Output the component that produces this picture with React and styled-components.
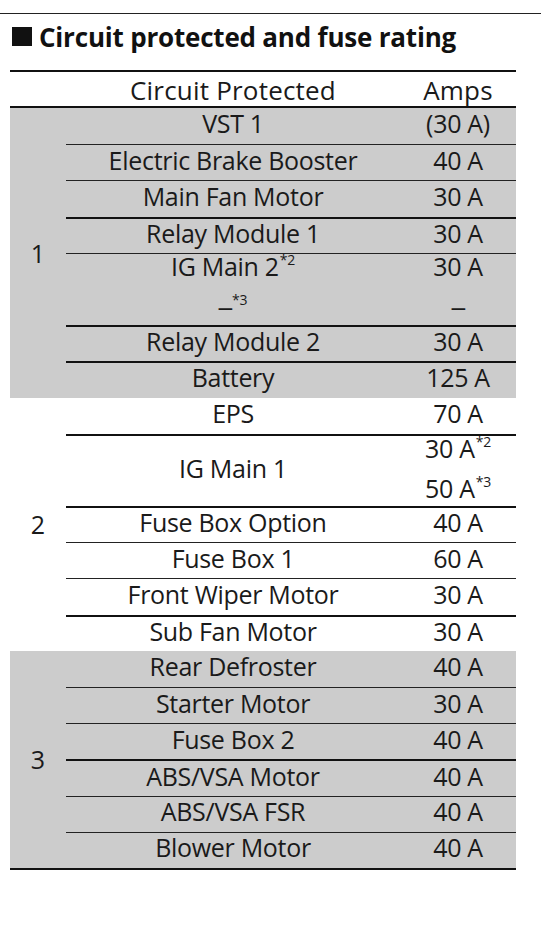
import React from 'react'
import styled, { createGlobalStyle } from 'styled-components'

const groups = [
  {
    label: '1',
    shaded: true,
    rows: [
      { name: ['VST 1'], amps: ['(30 A)'] },
      { name: ['Electric Brake Booster'], amps: ['40 A'] },
      { name: ['Main Fan Motor'], amps: ['30 A'] },
      { name: ['Relay Module 1'], amps: ['30 A'], thick: true },
      { name: [['IG Main 2', '*2'], ['–', '*3']], amps: ['30 A', '–'], lines: 2 },
      { name: ['Relay Module 2'], amps: ['30 A'], thick: true },
      { name: ['Battery'], amps: ['125 A'], thick: true },
    ],
  },
  {
    label: '2',
    shaded: false,
    rows: [
      { name: ['EPS'], amps: ['70 A'] },
      { name: ['IG Main 1'], amps: [['30 A', '*2'], ['50 A', '*3']], lines: 2, thick: true },
      { name: ['Fuse Box Option'], amps: ['40 A'], thick: true },
      { name: ['Fuse Box 1'], amps: ['60 A'] },
      { name: ['Front Wiper Motor'], amps: ['30 A'] },
      { name: ['Sub Fan Motor'], amps: ['30 A'], thick: true },
    ],
  },
  {
    label: '3',
    shaded: true,
    rows: [
      { name: ['Rear Defroster'], amps: ['40 A'] },
      { name: ['Starter Motor'], amps: ['30 A'] },
      { name: ['Fuse Box 2'], amps: ['40 A'] },
      { name: ['ABS/VSA Motor'], amps: ['40 A'], thick: true },
      { name: ['ABS/VSA FSR'], amps: ['40 A'] },
      { name: ['Blower Motor'], amps: ['40 A'] },
    ],
  },
]

const UNIT = 36.2

function Text({ value }) {
  // a value is either plain text or [text, superscript]
  if (Array.isArray(value)) {
    return <>{value[0] === '–' ? <Dash>–</Dash> : value[0]}<Sup>{value[1]}</Sup></>
  }
  return value === '–' ? <Dash>–</Dash> : value
}

function Cell({ values, lines, first, thick }) {
  return (
    <CellBox $first={first} $thick={thick} style={{ height: `${lines * UNIT}px` }}>
      {values.map((v, i) => (
        <Line key={i}>
          <Text value={v} />
        </Line>
      ))}
    </CellBox>
  )
}

function Group({ group }) {
  return (
    <GroupBox $shaded={group.shaded}>
      <GroupLabel>{group.label}</GroupLabel>
      <Rows>
        {group.rows.map((row, i) => {
          const lines = row.lines || 1
          return (
            <Row key={i}>
              <Cell values={row.name} lines={lines} first={i === 0} thick={row.thick} />
              <Cell values={row.amps} lines={lines} first={i === 0} thick={row.thick} />
            </Row>
          )
        })}
      </Rows>
    </GroupBox>
  )
}

export default function App() {
  return (
    <Page>
      <GlobalStyle />
      <Title>
        <Square />
        Circuit protected and fuse rating
      </Title>
      <Table>
        <Head>
          <div />
          <HeadCell>Circuit Protected</HeadCell>
          <HeadCell>Amps</HeadCell>
        </Head>
        {groups.map((g) => (
          <Group key={g.label} group={g} />
        ))}
      </Table>
    </Page>
  )
}

const GlobalStyle = createGlobalStyle`
  html, body {
    margin: 0;
    padding: 0;
    background: #fff;
  }
  body {
    font-family: "Open Sans", "Noto Sans", sans-serif;
    color: #1a1a1a;
  }
`

const Page = styled.div`
  width: 541px;
  margin-top: 13px;
  border-top: 1px solid #222;
  padding: 0 25px 0 10px;
  box-sizing: border-box;
`

const Title = styled.h2`
  display: flex;
  align-items: center;
  gap: 7px;
  margin: 0;
  padding: 0 0 11px 2px;
  height: 56px;
  box-sizing: border-box;
  font-size: 26px;
  font-weight: 700;
  letter-spacing: -0.2px;
  color: #111;
`

const Square = styled.span`
  width: 20px;
  height: 19px;
  background: #111;
  flex-shrink: 0;
`

const Table = styled.div`
  border-top: 2px solid #111;
  border-bottom: 2px solid #111;
`

const Head = styled.div`
  display: grid;
  grid-template-columns: 56px 334px 116px;
  height: 36px;
  padding-bottom: 4px;
  border-bottom: 2px solid #111;
  box-sizing: border-box;
`

const HeadCell = styled.div`
  display: flex;
  align-items: center;
  justify-content: center;
  font-size: 26px;
  letter-spacing: 0.2px;
`

const GroupBox = styled.div`
  display: grid;
  grid-template-columns: 56px 1fr;
  background: ${(p) => (p.$shaded ? '#cccccc' : '#ffffff')};
`

const GroupLabel = styled.div`
  display: flex;
  align-items: center;
  justify-content: center;
  font-size: 25px;
`

const Rows = styled.div`
  display: flex;
  flex-direction: column;
`

const Row = styled.div`
  display: grid;
  grid-template-columns: 334px 116px;
`

const CellBox = styled.div`
  display: flex;
  flex-direction: column;
  justify-content: center;
  box-sizing: border-box;
  border-top: ${(p) => (p.$first ? 'none' : p.$thick ? '2px solid #111' : '1px solid #222')};
  font-size: 25px;
  letter-spacing: -0.3px;
`

const Line = styled.div`
  flex: 1;
  display: flex;
  align-items: center;
  justify-content: center;
  padding-bottom: 6px;
`

const Dash = styled.span`
  display: inline-block;
  transform: scaleX(1.3);
`

const Sup = styled.sup`
  font-size: 14px;
  align-self: flex-start;
  margin-top: 4px;
  margin-left: 1px;
  line-height: 1;
`
